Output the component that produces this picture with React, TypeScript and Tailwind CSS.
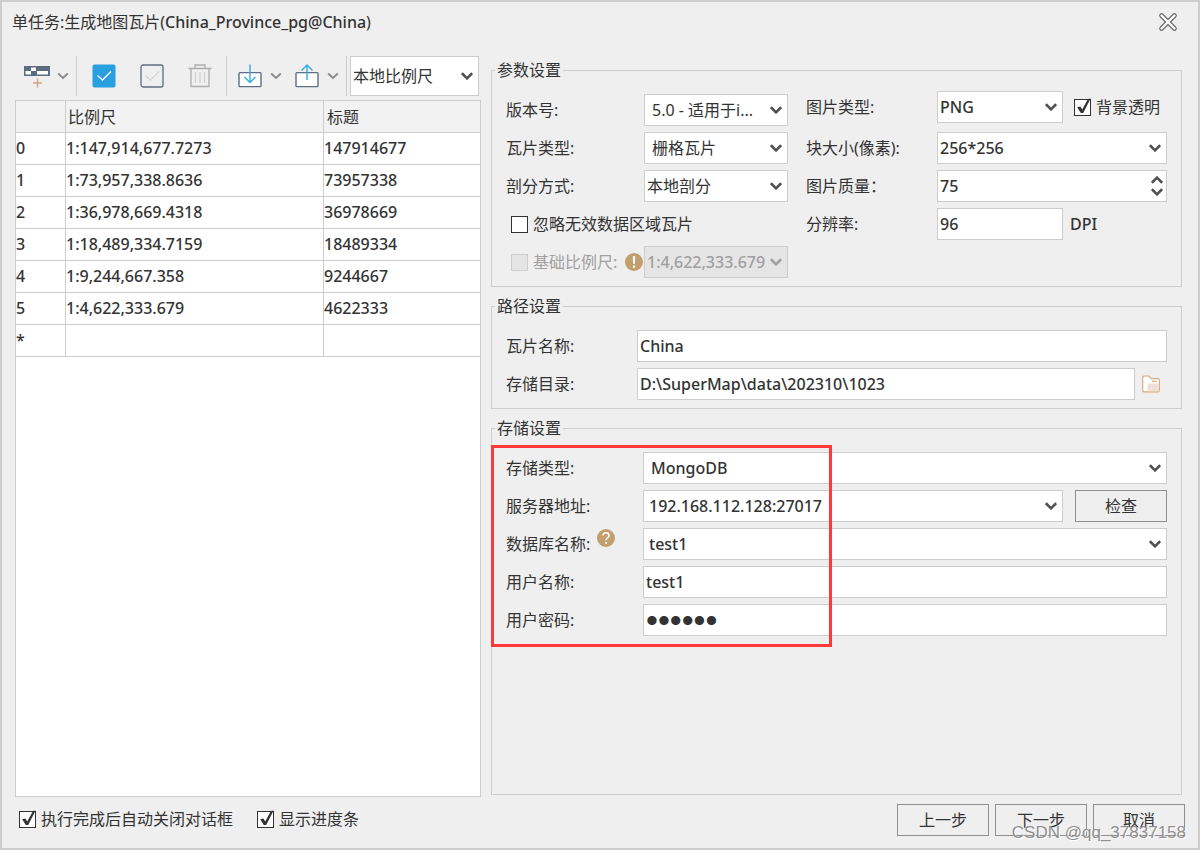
import React, { useState } from "react";

type SelectProps = {
  id: string;
  value: string;
  className?: string;
  padding?: string;
  disabled?: boolean;
};

const Chevron: React.FC<{ className?: string }> = ({ className }) => (
  <svg
    viewBox="0 0 12 8"
    fill="none"
    stroke="currentColor"
    className={className}
  >
    <path d="M0.9 1.2 L6 6.3 L11.1 1.2" strokeWidth="2.6" />
  </svg>
);

const Select: React.FC<SelectProps> = ({
  id,
  value,
  className = "",
  padding = "pl-[2px]",
  disabled = false,
}) => (
  <div className={`relative h-8 min-w-0 ${className}`}>
    <select
      id={id}
      disabled={disabled}
      defaultValue={value}
      className={`block h-full w-full appearance-none border border-[#cdcdcd] bg-white pr-5 text-[#333] disabled:bg-[#e5e5e5] disabled:text-[#a0a0a0] disabled:opacity-100 ${padding}`}
    >
      <option>{value}</option>
    </select>
    <Chevron
      className={`pointer-events-none absolute right-[6px] top-3 h-2 w-3 ${
        disabled ? "text-[#a0a0a0]" : "text-[#505050]"
      }`}
    />
  </div>
);

type CheckProps = {
  id: string;
  label: string;
  checked?: boolean;
  disabled?: boolean;
};

const Check: React.FC<CheckProps> = ({ id, label, checked, disabled }) => (
  <div className="flex items-center gap-[5px]">
    <div className="relative h-[17px] w-[17px] shrink-0">
      <input
        id={id}
        type="checkbox"
        defaultChecked={checked}
        disabled={disabled}
        className="peer block h-[17px] w-[17px] appearance-none border border-[#333] bg-white disabled:border-[#cdcdcd] disabled:bg-[#e5e5e5]"
      />
      <svg
        viewBox="0 0 17 17"
        className="pointer-events-none absolute inset-0 hidden h-[17px] w-[17px] overflow-visible peer-checked:block"
      >
        <path
          d="M3.2 8.2 L6.4 7.4 L8.2 10.4 L14 0 L16.6 -0.4 L9.2 14 L6.8 14 Z"
          fill="#333"
        />
      </svg>
    </div>
    <label htmlFor={id} className={disabled ? "text-[#a0a0a0]" : ""}>
      {label}
    </label>
  </div>
);

const Group: React.FC<{
  title: string;
  className?: string;
  children: React.ReactNode;
}> = ({ title, className = "", children }) => (
  <fieldset className={`min-w-0 border border-[#cdcdcd] ${className}`}>
    <legend className="ml-[3px] h-5 px-[2px] leading-5">{title}</legend>
    {children}
  </fieldset>
);

const Row: React.FC<{
  label: string;
  id: string;
  width: string;
  hint?: React.ReactNode;
  children: React.ReactNode;
}> = ({ label, id, width, hint, children }) => (
  <div className="flex h-8 items-center">
    <div className={`flex shrink-0 items-center gap-[7px] ${width}`}>
      <label htmlFor={id}>{label}</label>
      {hint}
    </div>
    {children}
  </div>
);

const Badge: React.FC<{ kind: "warn" | "help" }> = ({ kind }) => (
  <svg viewBox="0 0 18 18" className="h-[18px] w-[18px] shrink-0">
    <circle cx="9" cy="9" r="9" fill="#c49f6e" />
    {kind === "warn" ? (
      <path d="M7.8 3.2h2.4l-0.3 7.6h-1.8z M7.9 12.4h2.2v2.3h-2.2z" fill="#fff" />
    ) : (
      <>
        <path
          d="M6 6.6 Q6 3.8 9 3.8 Q12 3.8 12 6.4 Q12 7.8 10.4 8.8 Q9.1 9.7 9.1 11.4"
          fill="none"
          stroke="#fff"
          strokeWidth="1.5"
        />
        <path d="M8.2 13h1.8v1.8h-1.8z" fill="#fff" />
      </>
    )}
  </svg>
);

const SmallArrow = () => (
  <button type="button" aria-label="更多" className="text-[#8c8c8c]">
    <svg viewBox="0 0 12 8" className="h-2 w-3" fill="none" stroke="currentColor">
      <path d="M1.2 1.6 L6 6 L10.8 1.6" strokeWidth="2" />
    </svg>
  </button>
);

const AddRowIcon = () => (
  <svg viewBox="0 0 26 24" className="h-6 w-[26px]">
    <rect x="0" y="2" width="26" height="10" fill="#5b6b80" />
    <path d="M7 3.5h5v3.5h-5z M1.5 7h5.5v3.5h-5.5z M13 7h11v3.5h-11z" fill="#fff" />
    <path d="M13.5 14.5v9 M9 19h9" stroke="#d0a878" strokeWidth="1.4" />
  </svg>
);

const CheckAllIcon = () => (
  <svg viewBox="0 0 24 24" className="h-6 w-6">
    <rect x="0.5" y="0.5" width="23" height="23" rx="2" fill="#29a1e0" />
    <path d="M5.5 11.5 L10.5 16 L19 7.5" fill="none" stroke="#fff" strokeWidth="1.4" />
  </svg>
);

const UncheckIcon = () => (
  <svg viewBox="0 0 24 24" className="h-6 w-6" fill="none">
    <rect x="1" y="1" width="22" height="22" rx="2" stroke="#5f6d82" strokeWidth="1.3" />
    <path d="M5.5 11.5 L10.5 16 L19 7.5" stroke="#d6d6d6" strokeWidth="1.3" />
  </svg>
);

const TrashIcon = () => (
  <svg viewBox="0 0 24 24" className="h-6 w-6" fill="none" stroke="#acacac">
    <path d="M0.5 4.5h23 M7 4.5v-3.5h10v3.5 M3 4.5v18h18v-18" strokeWidth="1.3" />
    <path d="M7.5 8v11 M12 8v11 M16.5 8v11" stroke="#cfcfcf" strokeWidth="1.2" />
  </svg>
);

const TransferIcon: React.FC<{ up?: boolean }> = ({ up }) => (
  <svg viewBox="0 0 24 24" className="h-6 w-6" fill="none">
    <rect x="1" y="8.6" width="22" height="14" rx="0.8" fill="#fff" stroke="#5f6d82" strokeWidth="1.4" />
    <path
      d={up ? "M12 16v-15 M6.5 6.5 L12 1 L17.5 6.5" : "M12 0.5v17.5 M6.5 13 L12 18.5 L17.5 13"}
      stroke="#32ace4"
      strokeWidth="1.4"
    />
  </svg>
);

const FolderIcon = () => (
  <svg viewBox="0 0 18 18" className="h-[18px] w-[18px]" fill="none">
    <path
      d="M0.7 15.5V2.5Q0.7 1 2.2 1h4.6l2.4 2.6h6.6q1.5 0 1.5 1.5v10.4q0 1.3 -1.5 1.3h-13.6q-1.5 0 -1.5 -1.3z"
      fill="#fff"
      stroke="#d2ab82"
      strokeWidth="1.2"
    />
    <path d="M5.5 8.5h11v7.8h-11z" fill="#eee0d6" />
    <path d="M10 6.3h5" stroke="#d2ab82" strokeWidth="1.2" />
  </svg>
);

const scales = [
  ["1:147,914,677.7273", "147914677"],
  ["1:73,957,338.8636", "73957338"],
  ["1:36,978,669.4318", "36978669"],
  ["1:18,489,334.7159", "18489334"],
  ["1:9,244,667.358", "9244667"],
  ["1:4,622,333.679", "4622333"],
];

const head = "border-b border-r border-[#cdcdcd] last:border-r-0 text-left font-normal";
const cell = "border-b border-r border-[#cdcdcd] last:border-r-0 pb-[2px] font-medium";
const field = "block h-8 min-w-0 border border-[#cdcdcd] bg-white pl-[2px] text-[#333]";
const button = "h-8 w-[92px] shrink-0 border border-[#8f8f8f] bg-[#efefef]";

const Toolbar = () => (
  <div className="flex h-10 items-center justify-between">
    <div className="flex h-10 flex-1 items-center">
      <div className="flex h-10 w-[62px] items-center gap-[7px] border-r border-[#cdcdcd] pl-[9px]">
        <button type="button" aria-label="添加比例尺">
          <AddRowIcon />
        </button>
        <SmallArrow />
      </div>
      <div className="flex h-10 w-[150px] items-center gap-6 border-r border-[#cdcdcd] pl-[15px]">
        <button type="button" aria-label="全选">
          <CheckAllIcon />
        </button>
        <button type="button" aria-label="反选">
          <UncheckIcon />
        </button>
        <button type="button" aria-label="删除">
          <TrashIcon />
        </button>
      </div>
      <div className="flex h-10 w-[120px] items-center gap-[13px] border-r border-[#cdcdcd] pl-[11px]">
        <div className="flex items-center gap-2">
          <button type="button" aria-label="导入">
            <TransferIcon />
          </button>
          <SmallArrow />
        </div>
        <div className="flex items-center gap-2">
          <button type="button" aria-label="导出">
            <TransferIcon up />
          </button>
          <SmallArrow />
        </div>
      </div>
    </div>
    <div className="relative mr-[2px] h-10 w-[129px] shrink-0">
      <select
        aria-label="比例尺类型"
        className="block h-full w-full appearance-none border border-[#cdcdcd] bg-white pl-[2px] pr-6"
      >
        <option>本地比例尺</option>
      </select>
      <Chevron className="pointer-events-none absolute right-[6px] top-4 h-2 w-3 text-[#505050]" />
    </div>
  </div>
);

const ScaleTable = () => (
  <div className="flex-1 border border-[#cdcdcd] bg-white">
    <table className="w-full table-fixed border-separate border-spacing-0">
      <thead className="bg-[#f2f2f2]">
        <tr className="h-8">
          <th className={`w-[50px] ${head}`}></th>
          <th className={`w-[258px] pl-[2px] ${head}`}>比例尺</th>
          <th className={`pl-[3px] ${head}`}>标题</th>
        </tr>
      </thead>
      <tbody>
        {scales.map(([scale, title], i) => (
          <tr key={scale} className="h-8">
            <td className={cell}>{i}</td>
            <td className={cell}>{scale}</td>
            <td className={cell}>{title}</td>
          </tr>
        ))}
        <tr className="h-8">
          <td className={cell}>*</td>
          <td className={cell}></td>
          <td className={cell}></td>
        </tr>
      </tbody>
    </table>
  </div>
);

const Params: React.FC = () => {
  const [quality, setQuality] = useState(75);

  return (
    <Group title="参数设置" className="pb-2">
      <div className="grid grid-cols-[minmax(0,282fr)_minmax(0,361fr)] gap-[18px] px-[14px]">
        <div className="flex flex-col gap-[6px] pt-[14px]">
          <Row label="版本号:" id="version" width="w-[138px]">
            <Select id="version" value="5.0 - 适用于i..." padding="pl-[7px]" className="flex-1" />
          </Row>
          <Row label="瓦片类型:" id="tile-type" width="w-[138px]">
            <Select id="tile-type" value="栅格瓦片" padding="pl-[7px]" className="flex-1" />
          </Row>
          <Row label="剖分方式:" id="split" width="w-[138px]">
            <Select id="split" value="本地剖分" className="flex-1" />
          </Row>
          <div className="flex h-8 items-center pl-[5px]">
            <Check id="ignore" label="忽略无效数据区域瓦片" />
          </div>
          <div className="flex h-8 items-center pl-[5px]">
            <div className="flex w-[133px] shrink-0 items-center justify-between pr-px">
              <Check id="base-on" label="基础比例尺:" disabled />
              <Badge kind="warn" />
            </div>
            <Select
              id="base-scale"
              value="1:4,622,333.679"
              disabled
              className="flex-1 font-medium"
            />
          </div>
        </div>
        <div className="flex flex-col gap-[9px] pt-[11px]">
          <Row label="图片类型:" id="image-type" width="w-[131px]">
            <Select id="image-type" value="PNG" className="mr-[11px] w-[126px] font-medium" />
            <Check id="transparent" label="背景透明" checked />
          </Row>
          <div className="flex flex-col gap-[6px]">
            <Row label="块大小(像素):" id="block" width="w-[131px]">
              <Select id="block" value="256*256" className="flex-1 font-medium" />
            </Row>
            <Row label="图片质量：" id="quality" width="w-[131px]">
              <div className="flex h-8 min-w-0 flex-1 border border-[#cdcdcd] bg-white">
                <input
                  id="quality"
                  type="text"
                  inputMode="numeric"
                  value={quality}
                  onChange={(e) => setQuality(Number(e.target.value) || 0)}
                  className="min-w-0 flex-1 pl-[2px] font-medium"
                />
                <div className="flex w-[18px] flex-col items-center justify-center gap-1 text-[#505050]">
                  <button type="button" aria-label="增加" onClick={() => setQuality(quality + 1)}>
                    <Chevron className="block h-2 w-3 rotate-180" />
                  </button>
                  <button type="button" aria-label="减少" onClick={() => setQuality(quality - 1)}>
                    <Chevron className="block h-2 w-3" />
                  </button>
                </div>
              </div>
            </Row>
            <Row label="分辨率:" id="dpi" width="w-[131px]">
              <input
                id="dpi"
                type="text"
                defaultValue="96"
                className={`w-[126px] font-medium ${field}`}
              />
              <span className="ml-[7px] font-medium">DPI</span>
            </Row>
          </div>
        </div>
      </div>
    </Group>
  );
};

const Paths = () => (
  <Group title="路径设置" className="pb-2">
    <div className="flex flex-col gap-[6px] px-[14px] pt-[14px]">
      <Row label="瓦片名称:" id="tile-name" width="w-[131px]">
        <input
          id="tile-name"
          type="text"
          defaultValue="China"
          className={`flex-1 font-medium ${field}`}
        />
      </Row>
      <Row label="存储目录:" id="dir" width="w-[131px]">
        <input
          id="dir"
          type="text"
          defaultValue="D:\SuperMap\data\202310\1023"
          className={`flex-1 font-medium ${field}`}
        />
        <button type="button" aria-label="浏览" className="flex w-8 justify-center">
          <FolderIcon />
        </button>
      </Row>
    </div>
  </Group>
);

const Storage = () => (
  <div className="relative flex flex-1">
    <Group title="存储设置" className="flex-1">
      <div className="flex flex-col gap-[6px] px-[14px] pt-[14px]">
        <Row label="存储类型:" id="store-type" width="w-[137px]">
          <Select
            id="store-type"
            value="MongoDB"
            padding="pl-[7px]"
            className="flex-1 font-medium"
          />
        </Row>
        <Row label="服务器地址:" id="server" width="w-[137px]">
          <Select
            id="server"
            value="192.168.112.128:27017"
            padding="pl-[5px]"
            className="mr-3 flex-1 font-medium"
          />
          <button type="button" className={button}>
            检查
          </button>
        </Row>
        <Row
          label="数据库名称:"
          id="db"
          width="w-[137px]"
          hint={
            <div className="pb-3">
              <Badge kind="help" />
            </div>
          }
        >
          <Select id="db" value="test1" padding="pl-[5px]" className="flex-1 font-medium" />
        </Row>
        <Row label="用户名称:" id="user" width="w-[137px]">
          <input
            id="user"
            type="text"
            defaultValue="test1"
            className={`flex-1 font-medium ${field}`}
          />
        </Row>
        <Row label="用户密码:" id="password" width="w-[137px]">
          <input
            id="password"
            type="password"
            defaultValue="123456"
            className={`flex-1 font-['Liberation_Sans',sans-serif] text-[34px] ${field}`}
          />
        </Row>
      </div>
    </Group>
    <div className="pointer-events-none absolute left-0 top-[27px] h-[202px] w-[341px] border-[3px] border-[#fd3a3a]"></div>
  </div>
);

const App: React.FC = () => {
  return (
    <div className="relative flex min-h-screen flex-col border-2 border-[#cdcdcd] bg-[#efefef] font-['Noto_Sans','Noto_Sans_CJK_SC',sans-serif] text-[16px] leading-5 text-[#333]">
      <header className="flex h-[54px] items-start justify-between pl-[10px] pr-5 pt-[10px]">
        <h1>
          单任务:生成地图瓦片(
          <span className="font-medium">China_Province_pg@China</span>)
        </h1>
        <button type="button" aria-label="关闭">
          <svg viewBox="0 0 20 20" className="h-5 w-5" fill="none" strokeLinecap="round">
            <path d="M3.5 3.5 L16.5 16.5 M16.5 3.5 L3.5 16.5" stroke="#666" strokeWidth="4.6" />
            <path d="M3.5 3.5 L16.5 16.5 M16.5 3.5 L3.5 16.5" stroke="#fff" strokeWidth="2.4" />
          </svg>
        </button>
      </header>
      <main className="grid flex-1 grid-cols-[minmax(0,466fr)_minmax(0,691fr)] gap-[10px] pl-[13px] pr-4">
        <section className="flex min-w-0 flex-col gap-1">
          <Toolbar />
          <ScaleTable />
        </section>
        <section className="flex min-w-0 flex-col gap-[9px] pb-[2px] pt-1">
          <Params />
          <Paths />
          <Storage />
        </section>
      </main>
      <footer className="flex items-start justify-between pb-3 pl-[17px] pr-[13px] pt-[7px]">
        <div className="flex h-[30px] items-center gap-6">
          <Check id="auto-close" label="执行完成后自动关闭对话框" checked />
          <Check id="progress" label="显示进度条" checked />
        </div>
        <div className="flex gap-[6px]">
          <button type="button" className={button}>
            上一步
          </button>
          <button type="button" className={button}>
            下一步
          </button>
          <button type="button" className={button}>
            取消
          </button>
        </div>
      </footer>
      <span className="pointer-events-none absolute bottom-[5px] right-3 font-['Liberation_Sans',sans-serif] text-[17px] text-[#909090] [text-shadow:1px_1px_0_#fff]">
        CSDN @qq_37837158
      </span>
    </div>
  );
};

export default App;
